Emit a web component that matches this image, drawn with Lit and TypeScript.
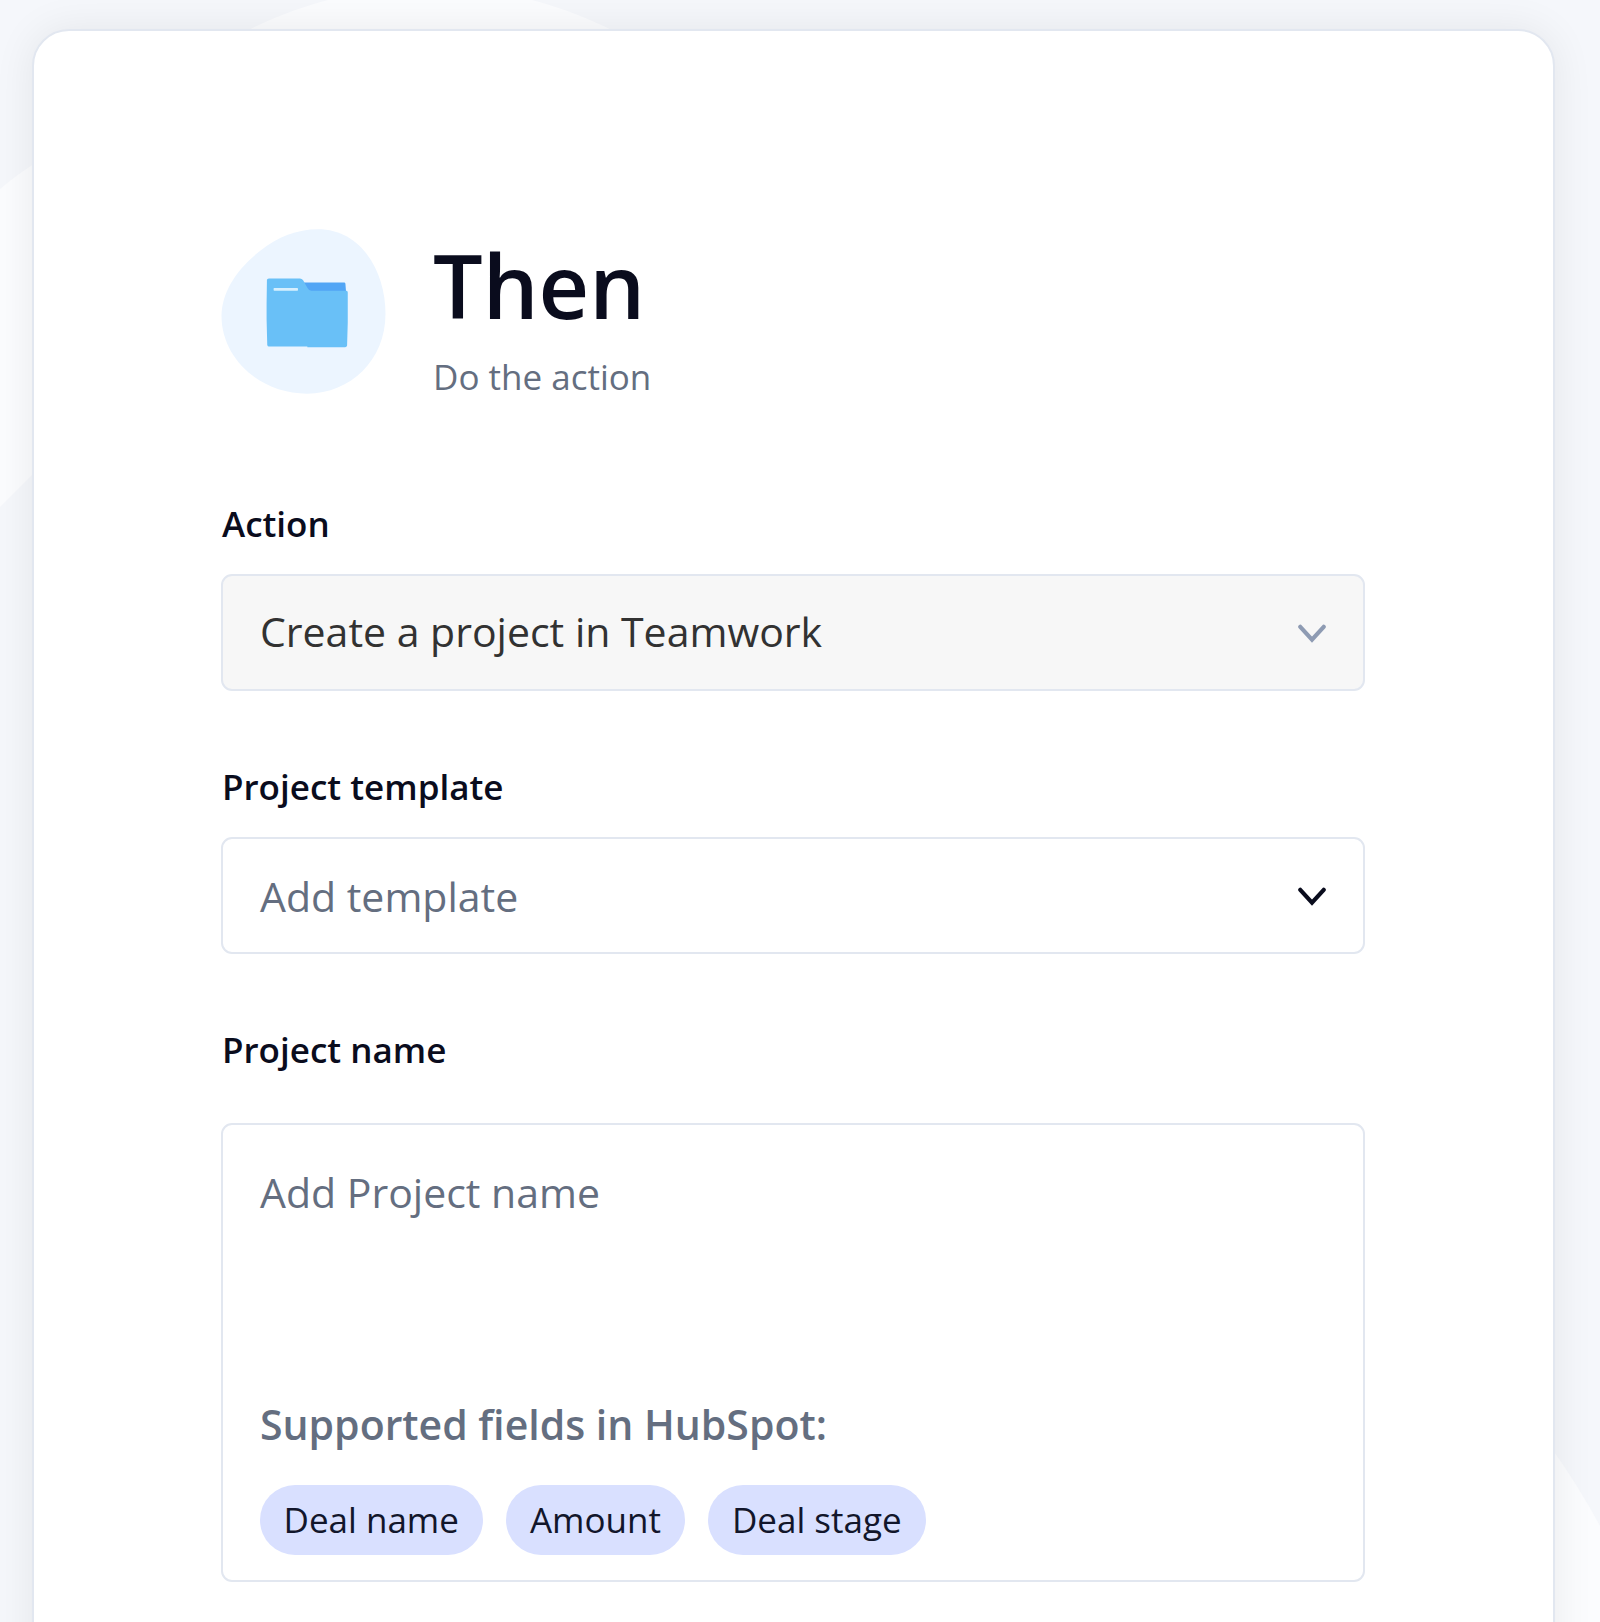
import { LitElement, html, svg, css } from "lit";
import { customElement, property } from "lit/decorators.js";

@customElement("select-field")
class SelectField extends LitElement {
  @property() label = "";
  @property() value = "";
  @property() placeholder = "";
  @property({ type: Boolean }) disabled = false;

  static styles = css`
    :host { display: block; }
    .label { font-size: 35px; line-height: 50px; font-weight: 600; color: #0a0c1d; margin-bottom: 25px; white-space: nowrap; padding-left: 1px; }
    .box { box-sizing: border-box; height: 117px; border: 2px solid #e2e7f0; border-radius: 11px; background: #fff; padding: 0 37px; display: flex; align-items: center; justify-content: space-between; }
    .box.disabled { background: #f7f7f7; }
    .text { font-size: 41px; line-height: 56px; color: #646e80; white-space: nowrap; }
    .disabled .text { color: #323232; padding-bottom: 3px; }
    .chevron { width: 28px; height: 20px; color: #0a0c1d; display: block; }
    .disabled .chevron { color: #8e9bb3; }
  `;

  render() {
    return html`
      <div class="label">${this.label}</div>
      <div class="box ${this.disabled ? "disabled" : ""}">
        <span class="text">${this.value || this.placeholder}</span>
        <svg class="chevron" viewBox="0 0 28 20" fill="none" stroke="currentColor" stroke-width="4.2" stroke-linecap="round">
          <path d="M2.3 3.8 L14 16.6 L25.7 3.8"></path>
        </svg>
      </div>
    `;
  }
}

@customElement("app-root")
class AppRoot extends LitElement {
  private fields = ["Deal name", "Amount", "Deal stage"];

  static styles = css`
    :host { display: block; font-family: "Open Sans", "Noto Sans", sans-serif; }
    .page { position: relative; box-sizing: border-box; width: 1600px; height: 1622px; overflow: hidden; background: #f5f7fb; padding: 29px 45px 0 32px; }
    .backdrop { position: absolute; inset: 0; width: 1600px; height: 1622px; }
    .card { position: relative; box-sizing: border-box; height: 1800px; background: #fff; border: 2px solid #e2e7f0; border-radius: 37px; box-shadow: 0 0 42px rgba(0, 0, 0, 0.075); padding: 198px 188px 0 187px; }
    .header { display: flex; height: 172px; margin-bottom: 98px; }
    .blob { width: 165px; height: 165px; margin-right: 47px; flex: none; }
    .heading { padding-top: 6px; }
    .title { margin: 0; font-size: 88px; line-height: 100px; font-weight: 600; color: #0a0c1d; }
    .subtitle { margin: 18px 0 0; font-size: 35px; line-height: 48px; color: #646e80; white-space: nowrap; }
    .form { display: flex; flex-direction: column; gap: 71px; }
    .label { font-size: 35px; line-height: 50px; font-weight: 600; color: #0a0c1d; margin-bottom: 48px; padding-left: 1px; }
    .area { box-sizing: border-box; height: 459px; border: 2px solid #e2e7f0; border-radius: 11px; padding: 39px 37px 25px; display: flex; flex-direction: column; }
    .placeholder { font-size: 41px; line-height: 56px; color: #646e80; flex: 1; }
    .supported { font-size: 41px; line-height: 56px; font-weight: 600; color: #646e80; margin-bottom: 33px; white-space: nowrap; }
    .chips { display: flex; gap: 23px; }
    .chip { box-sizing: border-box; height: 70px; border-radius: 35px; background: #d9e0ff; color: #12162b; font-size: 35px; line-height: 69px; padding: 0 24.5px 0 23.5px; white-space: nowrap; }
  `;

  private renderFolder() {
    return svg`
      <path d="M290 1 C420 1 492 128 492 254 C492 392 388 493 257 493 C116 493 1 388 1 260 C1 190 46 120 117 65 C170 24 226 1 290 1Z" fill="#ecf5ff"></path>
      <path d="M245 160 H368 Q372 160 372 164 L374 190 H245Z" fill="#52a5f5"></path>
      <path d="M143 148 H236 Q241 148 245 153 L258 176 Q262 184 270 185 H375 Q379 185 379 190 V280 L377 349 Q376 354 371 354 H258 V352 H143 Q139 352 138 347 L136 270 V225 L137 153 Q137 148 143 148Z" fill="#69c0f7"></path>
      <rect x="157" y="177" width="73" height="8" rx="2" fill="#d6effe"></rect>
    `;
  }

  render() {
    return html`
      <div class="page">
        <svg class="backdrop" viewBox="0 0 1600 1622" fill="#fbfcfe">
          <circle cx="430" cy="393" r="406"></circle>
          <path d="M0 189 Q16 175 40 160 V467 L0 507Z"></path>
          <path d="M1550 1446 Q1578 1485 1600 1526 V1622 H1550Z"></path>
        </svg>
        <main class="card">
          <header class="header">
            <svg class="blob" viewBox="0 0 493 494">${this.renderFolder()}</svg>
            <div class="heading">
              <h1 class="title">Then</h1>
              <p class="subtitle">Do the action</p>
            </div>
          </header>
          <div class="form">
            <select-field label="Action" value="Create a project in Teamwork" disabled></select-field>
            <select-field label="Project template" placeholder="Add template"></select-field>
            <section>
              <div class="label">Project name</div>
              <div class="area">
                <div class="placeholder">Add Project name</div>
                <div class="supported">Supported fields in HubSpot:</div>
                <div class="chips">${this.fields.map((f) => html`<span class="chip">${f}</span>`)}</div>
              </div>
            </section>
          </div>
        </main>
      </div>
    `;
  }
}
